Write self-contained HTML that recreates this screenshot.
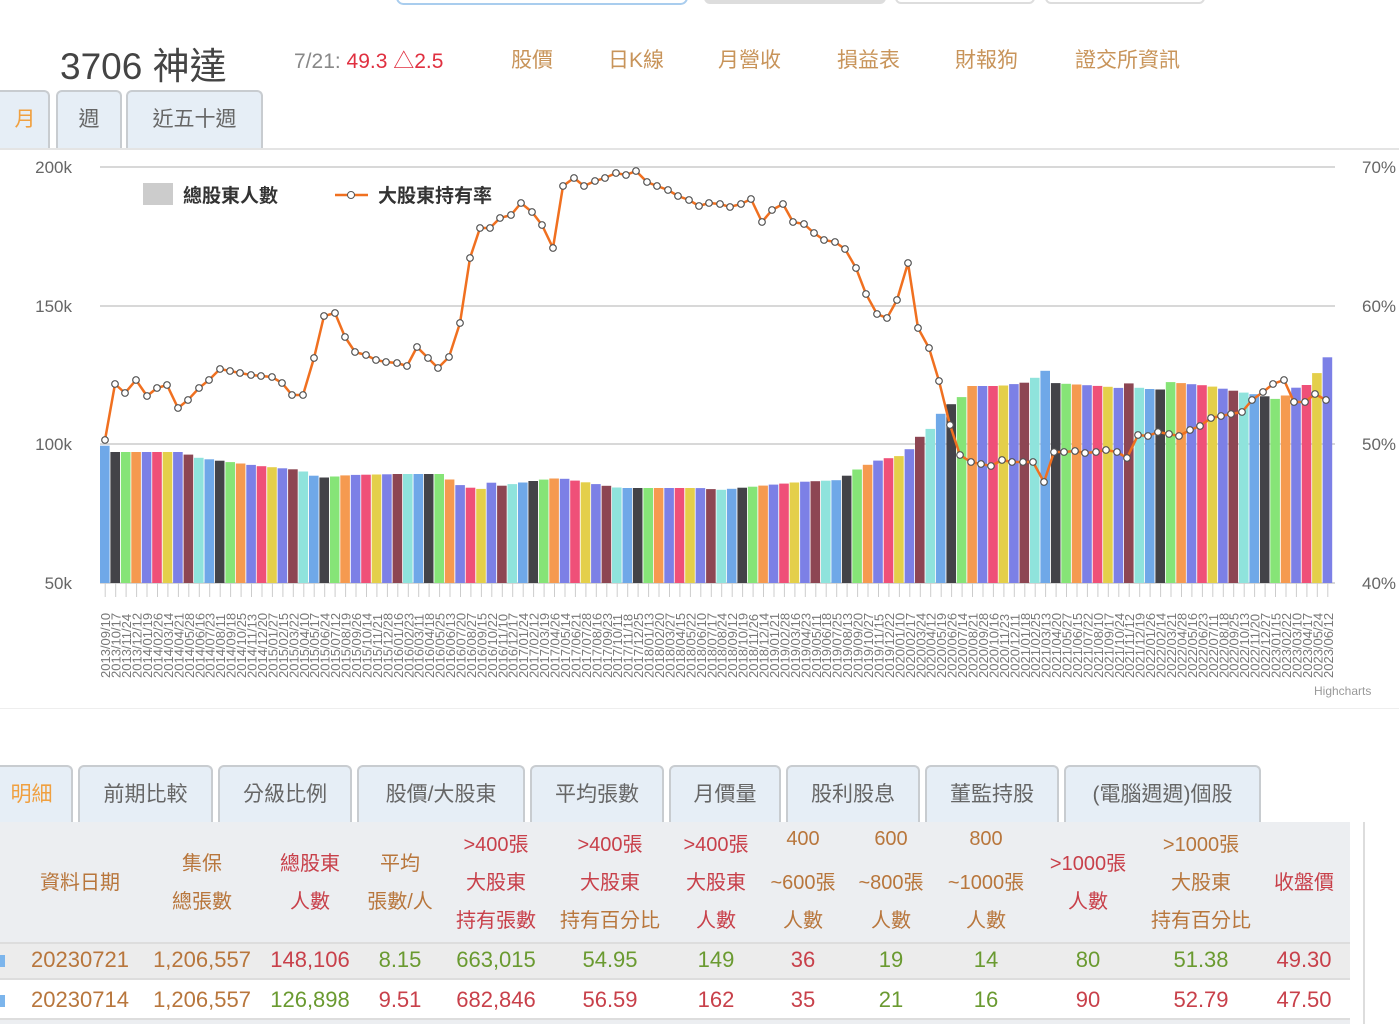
<!DOCTYPE html>
<html><head><meta charset="utf-8">
<style>
*{margin:0;padding:0;box-sizing:border-box}
body{width:1399px;height:1024px;overflow:hidden;background:#fff;font-family:"Liberation Sans","Noto Sans CJK TC",sans-serif;position:relative}
.a{position:absolute;white-space:nowrap}
.tab{position:absolute;background:#e6eef6;border:2px solid #c8ccd0;border-bottom:none;border-radius:6px 6px 0 0;color:#666;font-size:21px;text-align:center}
.nav{position:absolute;top:44px;color:#c8945a;font-size:21px}
.c{position:absolute;text-align:center;white-space:nowrap}
</style></head><body>
<div class="a" style="left:396px;top:-10px;width:292px;height:15px;border:2px solid #a9cdee;border-radius:8px;"></div>
<div class="a" style="left:704px;top:-10px;width:182px;height:14px;background:#ddd;border-radius:6px;"></div>
<div class="a" style="left:895px;top:-10px;width:140px;height:14px;border:2px solid #ddd;border-radius:6px;"></div>
<div class="a" style="left:1045px;top:-10px;width:160px;height:14px;border:2px solid #ddd;border-radius:6px;"></div>

<div class="a" style="left:60px;top:36px;font-size:37px;color:#444">3706 神達</div>
<div class="a" style="left:294px;top:45px;font-size:21px;color:#888">7/21: <span style="color:#e03040">49.3 △2.5</span></div>
<div class="nav" style="left:511px">股價</div>
<div class="nav" style="left:608px">日K線</div>
<div class="nav" style="left:718px">月營收</div>
<div class="nav" style="left:837px">損益表</div>
<div class="nav" style="left:955px">財報狗</div>
<div class="nav" style="left:1075px">證交所資訊</div>

<div class="tab" style="left:-10px;top:90px;width:60px;height:58px;line-height:56px;color:#f0a040;padding-left:10px">月</div>
<div class="tab" style="left:56px;top:90px;width:66px;height:58px;line-height:56px">週</div>
<div class="tab" style="left:126px;top:90px;width:137px;height:58px;line-height:56px">近五十週</div>
<div class="a" style="left:0;top:148px;width:1399px;height:2px;background:#e4e4e4"></div>

<svg class="a" style="left:0;top:150px" width="1399" height="560" id="ch"></svg>
<div class="a" style="left:0;top:708px;width:1399px;height:1px;background:#eee"></div>

<div class="tab" style="left:-10px;top:765px;width:83px;height:58px;line-height:56px;color:#f0a040">明細</div>
<div class="tab" style="left:78px;top:765px;width:135px;height:58px;line-height:56px">前期比較</div>
<div class="tab" style="left:218px;top:765px;width:134px;height:58px;line-height:56px">分級比例</div>
<div class="tab" style="left:357px;top:765px;width:168px;height:58px;line-height:56px">股價/大股東</div>
<div class="tab" style="left:530px;top:765px;width:134px;height:58px;line-height:56px">平均張數</div>
<div class="tab" style="left:669px;top:765px;width:112px;height:58px;line-height:56px">月價量</div>
<div class="tab" style="left:786px;top:765px;width:134px;height:58px;line-height:56px">股利股息</div>
<div class="tab" style="left:925px;top:765px;width:134px;height:58px;line-height:56px">董監持股</div>
<div class="tab" style="left:1064px;top:765px;width:197px;height:58px;line-height:56px">(電腦週週)個股</div>

<div class="a" style="left:0;top:822px;width:1365px;height:202px;background:#fff;border-right:2px solid #ddd"></div>
<div class="a" style="left:0;top:822px;width:1350px;height:120px;background:#eceef1"></div>
<div class="a" style="left:0;top:942px;width:1350px;height:38px;background:#ececec;border-top:2px solid #ddd;border-bottom:2px solid #ddd"></div>
<div class="a" style="left:0;top:1018px;width:1350px;height:6px;background:#eceef1;border-top:2px solid #ddd"></div>
<div class="a" style="left:0;top:955px;width:5px;height:12px;background:#7cb5ec"></div>
<div class="a" style="left:0;top:995px;width:5px;height:12px;background:#7cb5ec"></div>
<div id="tb"></div>

<script>
(function(){
var svg=document.getElementById('ch'),h='';
var OY=150;
function Y(y){return y-OY}
[167,306,444,583].forEach(function(y){h+='<line x1="100" x2="1335" y1="'+Y(y)+'" y2="'+Y(y)+'" stroke="#d8d8d8" stroke-width="2"/>';});
var ll=[['200k',167],['150k',306],['100k',444],['50k',583]];
ll.forEach(function(l){h+='<text x="72" y="'+(Y(l[1])+6)+'" text-anchor="end" font-size="17" fill="#666">'+l[0]+'</text>';});
var rl=[['70%',167],['60%',306],['50%',444],['40%',583]];
rl.forEach(function(l){h+='<text x="1362" y="'+(Y(l[1])+6)+'" font-size="17" fill="#666">'+l[0]+'</text>';});
var pts=[[105,440],[115,384],[125,393],[136,380],[147,396],[157,388],[167,385],[178,408],[188,400],[199,388],[209,380],[220,369],[230,371],[240,373],[251,375],[261,376],[272,377],[282,383],[292,395],[303,395],[314,358],[324,316],[335,313],[345,337],[355,352],[366,355],[376,360],[386,362],[397,363],[407,366],[417,347],[428,358],[438,368],[449,357],[460,323],[470,258],[480,228],[490,228],[500,218],[511,215],[521,203],[532,212],[542,225],[553,248],[563,186],[574,178],[584,186],[595,181],[605,178],[616,173],[626,175],[636,171],[647,182],[657,186],[668,190],[678,196],[689,200],[699,206],[709,203],[720,204],[730,207],[741,204],[751,199],[762,222],[772,210],[783,204],[793,222],[804,224],[814,233],[824,240],[835,242],[845,249],[856,268],[866,294],[877,314],[887,318],[897,300],[908,263],[918,328],[929,348],[939,381],[950,425],[960,455],[971,462],[981,464],[991,466],[1002,460],[1012,462],[1023,462],[1033,462],[1044,482],[1054,452],[1064,452],[1075,451],[1085,453],[1096,452],[1106,450],[1117,452],[1127,458],[1138,435],[1148,436],[1158,432],[1169,434],[1179,436],[1190,430],[1200,426],[1211,418],[1221,416],[1231,414],[1242,412],[1252,400],[1263,392],[1273,384],[1284,380],[1294,402],[1305,402],[1315,394],[1326,400]];
var bk=[[100,440],[111,452],[180,452],[200,458],[260,466],[300,470],[320,478],[350,475],[400,474],[440,474],[460,485],[480,490],[490,482],[500,486],[540,480],[560,478],[620,488],[700,488],[720,490],[760,486],[800,482],[840,480],[860,468],[880,460],[905,455],[920,437],[930,430],[940,415],[950,405],[960,400],[970,386],[1000,386],[1030,382],[1045,370],[1055,383],[1100,386],[1120,388],[1130,383],[1140,388],[1160,390],[1170,382],[1210,386],[1240,392],[1260,395],[1280,400],[1300,385],[1310,385],[1318,372],[1328,357],[1340,357]];
function bt(x){for(var i=0;i<bk.length-1;i++){if(x>=bk[i][0]&&x<=bk[i+1][0]){var f=(x-bk[i][0])/(bk[i+1][0]-bk[i][0]);return bk[i][1]+f*(bk[i+1][1]-bk[i][1]);}}return 386;}
var cols=['#6fa8e8','#434348','#86e477','#f59a50','#7c80e6','#ef5078','#e4cf4a','#7c80e6','#8d4653','#8fe3dc'];
var n=pts.length,w=(1333-100)/n;
for(var i=0;i<n;i++){var x=100+i*w,cx=x+w/2,bt0=bt(cx);
h+='<rect x="'+x.toFixed(1)+'" y="'+Y(bt0).toFixed(1)+'" width="'+(w-0.8).toFixed(1)+'" height="'+(583-bt0).toFixed(1)+'" fill="'+cols[i%10]+'"/>';
h+='<line x1="'+cx.toFixed(1)+'" x2="'+cx.toFixed(1)+'" y1="'+Y(583)+'" y2="'+Y(597)+'" stroke="#ccc"/>';
var yr=2013+Math.floor((i+8)/12),mo=((i+8)%12)+1;
var lab=yr+'/'+(mo<10?'0':'')+mo+'/'+(10+(i*7)%19);
h+='<text transform="translate('+(cx+5).toFixed(1)+','+Y(678)+') rotate(-90)" font-size="13" fill="#777">'+lab+'</text>';}
var d='';pts.forEach(function(p,i){d+=(i?'L':'M')+p[0]+' '+Y(p[1]);});
h+='<path d="'+d+'" fill="none" stroke="#f07020" stroke-width="2.5"/>';
pts.forEach(function(p){h+='<circle cx="'+p[0]+'" cy="'+Y(p[1])+'" r="3.3" fill="#fff" stroke="#555" stroke-width="1.2"/>';});
h+='<rect x="143" y="'+Y(183)+'" width="30" height="22" fill="#ccc"/><text x="183" y="'+Y(202)+'" font-size="19" font-weight="bold" fill="#333">總股東人數</text>';
h+='<line x1="335" x2="368" y1="'+Y(195)+'" y2="'+Y(195)+'" stroke="#f07020" stroke-width="2.5"/><circle cx="351" cy="'+Y(195)+'" r="3.5" fill="#fff" stroke="#555"/><text x="378" y="'+Y(202)+'" font-size="19" font-weight="bold" fill="#333">大股東持有率</text>';
h+='<text x="1314" y="'+Y(695)+'" font-size="12" fill="#999">Highcharts</text>';
svg.innerHTML=h;

var B='#b8763c',R='#c8404a',G='#6a9a30';
var cols2=[[80,[['資料日期',B]],0],[202,[['集保',B],['總張數',B]],0],[310,[['總股東',R],['人數',R]],0],[400,[['平均',B],['張數/人',B]],0],
[496,[['>400張',R],['大股東',R],['持有張數',R]],1],[610,[['>400張',R],['大股東',R],['持有百分比',B]],1],[716,[['>400張',R],['大股東',R],['人數',R]],1],
[803,[['400',B],['~600張',B],['人數',B]],1],[891,[['600',B],['~800張',B],['人數',B]],1],[986,[['800',B],['~1000張',B],['人數',B]],1],
[1088,[['>1000張',R],['人數',R]],0],[1201,[['>1000張',B],['大股東',B],['持有百分比',B]],1],[1304,[['收盤價',R]],0]];
var t='';
cols2.forEach(function(c){var ls=c[1],m=ls.length;var y0=880-(m-1)*19-14;
ls.forEach(function(l,j){t+='<div class="c" style="left:'+(c[0]-70)+'px;width:140px;top:'+(y0+j*38)+'px;font-size:20px;color:'+l[1]+'">'+l[0]+'</div>';});});
var rows=[[['20230721',B],['1,206,557',B],['148,106',R],['8.15',G],['663,015',G],['54.95',G],['149',G],['36',R],['19',G],['14',G],['80',G],['51.38',G],['49.30',R]],
[['20230714',B],['1,206,557',B],['126,898',G],['9.51',R],['682,846',R],['56.59',R],['162',R],['35',R],['21',G],['16',G],['90',R],['52.79',R],['47.50',R]]];
rows.forEach(function(r,ri){r.forEach(function(v,k){t+='<div class="c" style="left:'+(cols2[k][0]-70)+'px;width:140px;top:'+(947+ri*40)+'px;font-size:22px;color:'+v[1]+'">'+v[0]+'</div>';});});
document.getElementById('tb').innerHTML=t;
})();
</script>
</body></html>
